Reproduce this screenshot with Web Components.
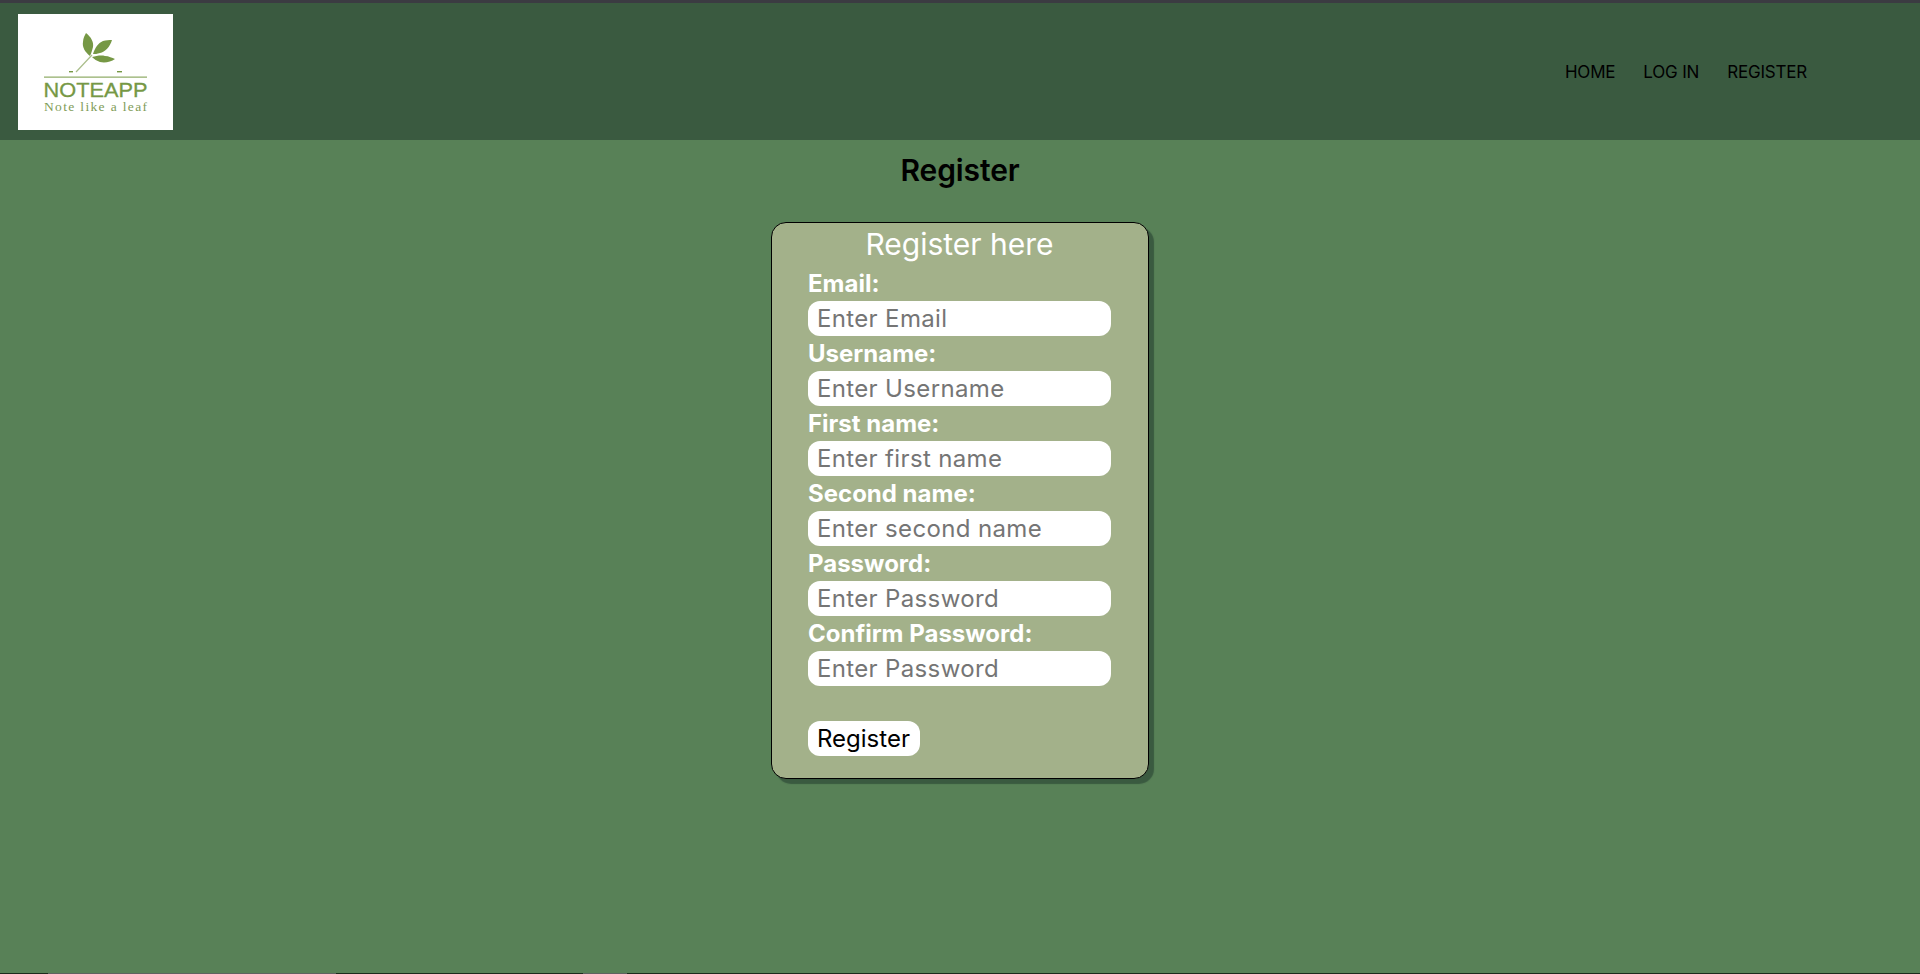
<!DOCTYPE html>
<html lang="en">
<head>
<meta charset="utf-8">
<title>Register</title>
<style>
  html, body { height: 100%; }
  body {
    margin: 0;
    display: flex;
    flex-direction: column;
    height: 974px;
    overflow: hidden;
    background: #588157;
    font-family: "Inter", "Noto Sans", sans-serif;
  }
</style>
</head>
<body>
  <note-header>
    <a slot="nav" href="#">HOME</a>
    <a slot="nav" href="#">LOG IN</a>
    <a slot="nav" href="#">REGISTER</a>
  </note-header>
  <register-page></register-page>
  <screen-edge></screen-edge>

<script>
class NoteLogo extends HTMLElement {
  constructor() {
    super();
    this.attachShadow({mode: 'open'});
  }

  connectedCallback() {
    this.shadowRoot.innerHTML = `
      <style>
        :host {
          display: block;
          width: 155px;
          height: 116px;
          background: #fff;
        }
        svg { display: block; }
      </style>
      <svg width="155" height="116" viewBox="18 14 155 116">
        <g fill="#769845">
          <path d="M86 33 C91 37 94 42 93 47 C92 51 91 54 90 56 C85 52 82 47 83 42 C83 38 85 35 86 33Z"/>
          <path d="M112 40 C110 47 105 52 100 53 C97 54 95 54 93 54 C95 48 98 43 103 41 C106 40 109 40 112 40Z"/>
          <path d="M115 59 C111 62 105 63 100 62 C97 61 94 59 92 57 C96 56 101 55 105 56 C109 56 112 58 115 59Z"/>
          <rect x="69" y="71" width="4" height="1.4"/>
          <rect x="117" y="71" width="5" height="1.4"/>
          <rect x="44" y="76.6" width="103" height="1"/>
        </g>
        <path d="M92 55 L76 72" stroke="#a9bd8a" stroke-width="1.2" fill="none"/>
        <text x="43.5" y="97" font-family="Liberation Sans" font-size="21" fill="#769845" stroke="#769845" stroke-width="0.3" textLength="104" lengthAdjust="spacingAndGlyphs">NOTEAPP</text>
        <text x="44" y="111" font-family="Liberation Serif" font-size="13.5" fill="#7f9c58" textLength="103">Note like a leaf</text>
      </svg>
    `;
  }
}

class NoteHeader extends HTMLElement {
  constructor() {
    super();
    this.attachShadow({mode: 'open'});
  }

  connectedCallback() {
    this.shadowRoot.innerHTML = `
      <style>
        :host {
          display: block;
          border-top: 3px solid #3b3b42;
          background: #3a5a40;
        }
        header {
          display: flex;
          align-items: flex-start;
          justify-content: space-between;
          height: 137px;
          padding: 11px 113px 0 18px;
          box-sizing: border-box;
        }
        nav {
          display: flex;
          gap: 28px;
          padding-top: 45px;
        }
        ::slotted(a) {
          color: #000;
          font-size: 17px;
          line-height: 27px;
          letter-spacing: -0.2px;
          text-decoration: none;
        }
      </style>
      <header>
        <note-logo></note-logo>
        <nav><slot name="nav"></slot></nav>
      </header>
    `;
  }
}

class FormField extends HTMLElement {
  constructor() {
    super();
    this.attachShadow({mode: 'open'});
  }

  connectedCallback() {
    this.shadowRoot.innerHTML = `
      <style>
        :host { display: block; }
        label {
          display: block;
          height: 35px;
          color: #fff;
          font-size: 24px;
          font-weight: 700;
          line-height: 35px;
        }
        input {
          display: block;
          width: 100%;
          height: 35px;
          box-sizing: border-box;
          padding: 0 9px;
          border: 0;
          border-radius: 12px;
          background: #fff;
          font: inherit;
          font-size: 24px;
          letter-spacing: 0.35px;
        }
        input::placeholder { color: #757575; opacity: 1; }
      </style>
      <label></label>
      <input>
    `;

    this.shadowRoot.querySelector('label').textContent = this.getAttribute('label');
    const input = this.shadowRoot.querySelector('input');
    input.placeholder = this.getAttribute('placeholder');
    input.type = this.getAttribute('type') || 'text';
  }
}

class RegisterPage extends HTMLElement {
  constructor() {
    super();
    this.attachShadow({mode: 'open'});
  }

  connectedCallback() {
    this.shadowRoot.innerHTML = `
      <style>
        :host {
          display: flex;
          flex-direction: column;
          align-items: center;
          flex: 1;
          background: #588157;
        }
        h1 {
          margin: 8px 0 0;
          height: 44px;
          color: #000;
          font-size: 30px;
          font-weight: 600;
          line-height: 44px;
          letter-spacing: -0.1px;
        }
        form {
          display: block;
          width: 378px;
          margin-top: 30px;
          padding: 0 37px 22px 36px;
          box-sizing: border-box;
          border: 1px solid #000;
          border-radius: 15px;
          background: #a3b18a;
          box-shadow: 5px 5px 1px #3a5a40;
        }
        h2 {
          margin: 0;
          height: 43px;
          color: #fff;
          font-size: 30px;
          font-weight: 400;
          line-height: 43px;
          text-align: center;
        }
        button {
          display: block;
          height: 35px;
          margin-top: 35px;
          padding: 0 10px 0 9px;
          border: 0;
          border-radius: 12px;
          background: #fff;
          color: #000;
          font: inherit;
          font-size: 24px;
        }
      </style>
      <h1>Register</h1>
      <form>
        <h2>Register here</h2>
        <form-field label="Email:" placeholder="Enter Email" type="email"></form-field>
        <form-field label="Username:" placeholder="Enter Username"></form-field>
        <form-field label="First name:" placeholder="Enter first name"></form-field>
        <form-field label="Second name:" placeholder="Enter second name"></form-field>
        <form-field label="Password:" placeholder="Enter Password" type="password"></form-field>
        <form-field label="Confirm Password:" placeholder="Enter Password" type="password"></form-field>
        <button type="button">Register</button>
      </form>
    `;
  }
}

// the 1px strip the screenshot caught along the bottom of the window
class ScreenEdge extends HTMLElement {
  constructor() {
    super();
    this.attachShadow({mode: 'open'});
  }

  connectedCallback() {
    this.shadowRoot.innerHTML = `
      <style>
        :host {
          display: block;
          height: 1px;
          background: linear-gradient(to right,
            #1c2b1c 0 48px, #5f6360 48px 336px, #1c2b1c 336px 583px,
            #5f6360 583px 627px, #1c2b1c 627px);
        }
      </style>
    `;
  }
}

customElements.define('note-logo', NoteLogo);
customElements.define('note-header', NoteHeader);
customElements.define('form-field', FormField);
customElements.define('register-page', RegisterPage);
customElements.define('screen-edge', ScreenEdge);
</script>
</body>
</html>
